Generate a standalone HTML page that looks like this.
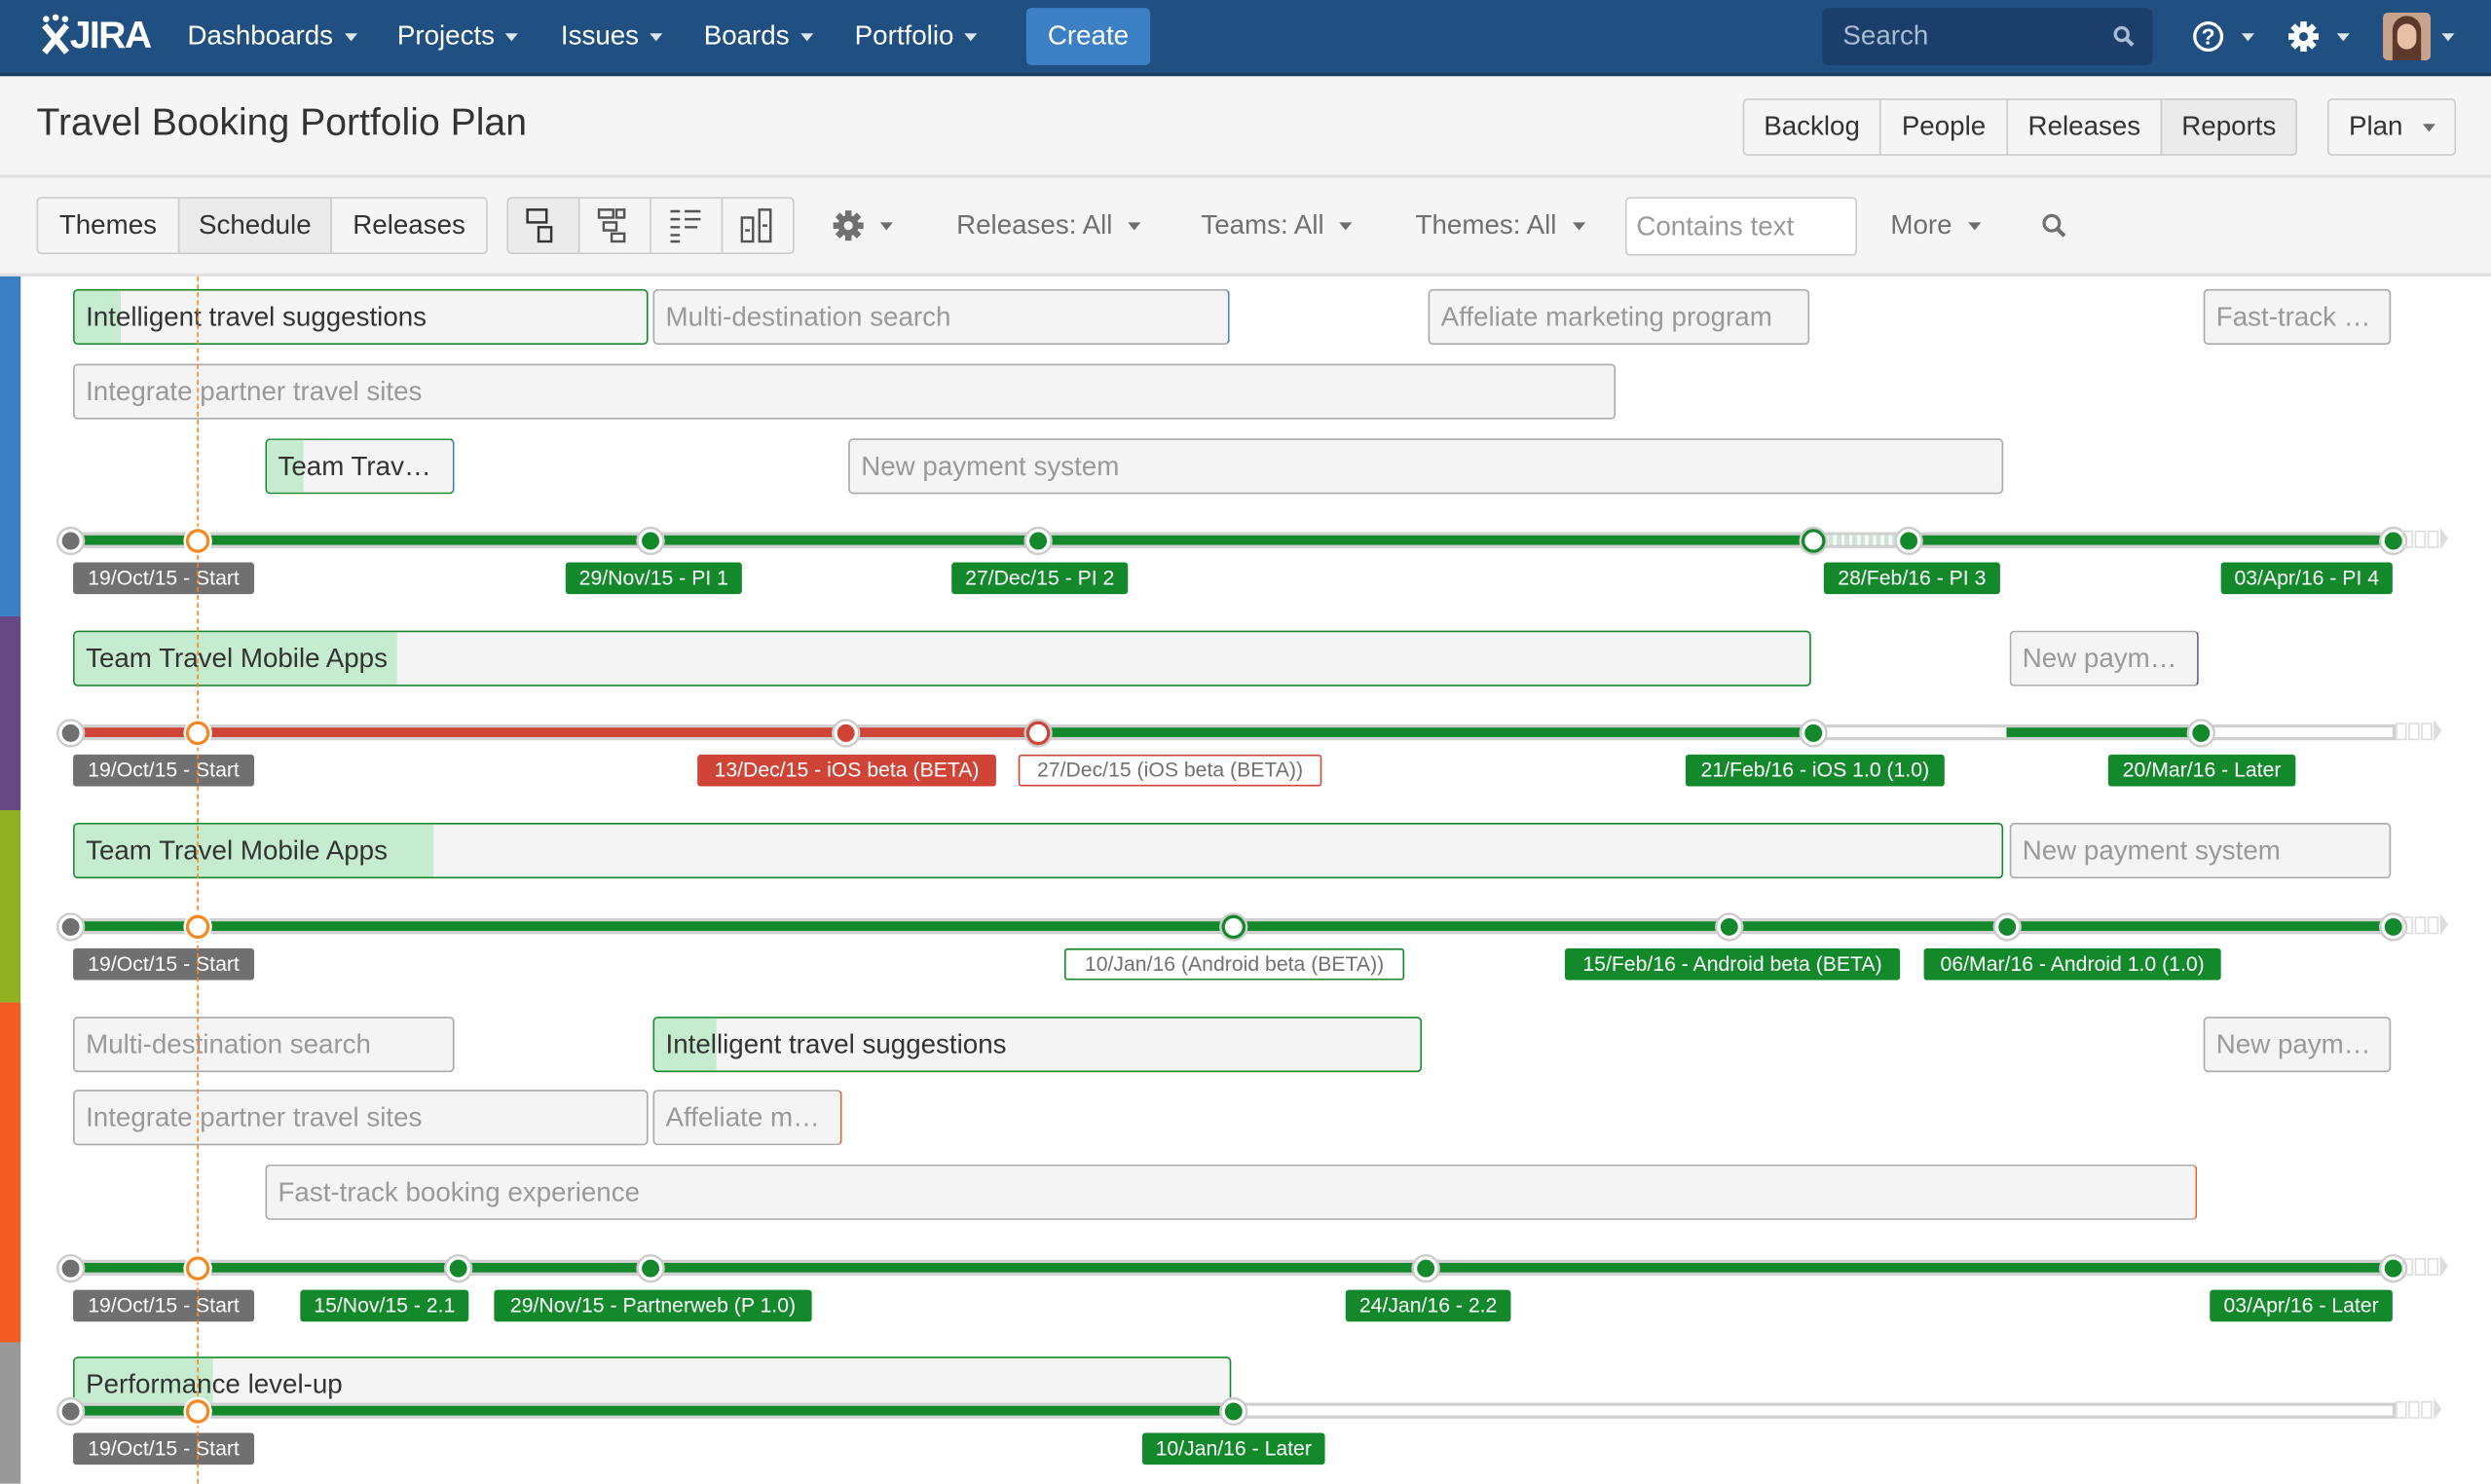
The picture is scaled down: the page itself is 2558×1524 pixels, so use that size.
<!DOCTYPE html>
<html><head><meta charset="utf-8"><style>
html,body{margin:0;padding:0;width:2558px;height:1524px;overflow:hidden;background:#fff}
#w{position:absolute;left:0;top:0;width:1568px;height:934px;transform:scale(1.63138);transform-origin:0 0;font-family:"Liberation Sans",Arial,sans-serif;overflow:hidden;background:#fff}
.a{position:absolute;white-space:nowrap;box-sizing:border-box}
.nav{color:#fff;font-size:17px;top:13px}
.car{display:inline-block;width:0;height:0;border-left:4px solid transparent;border-right:4px solid transparent;border-top:5px solid currentColor;vertical-align:middle;margin-left:7px;opacity:.85}
.btn{top:62px;height:36px;line-height:34px;border:1px solid #ccc;background:#f5f5f5;font-size:17px;color:#333;text-align:center}
.tb{top:124px;height:36px;line-height:34px;border:1px solid #ccc;background:#f5f5f5;font-size:17px;color:#333;text-align:center}
.fl{top:132px;font-size:17px;color:#707070}
.bar{height:35px;border:1px solid #aaa;border-radius:3px;background:#f4f4f4;font-size:17px;line-height:33px;color:#999;padding-left:7px;overflow:hidden}
.bar.g{border-color:#14892c;color:#333}
.bar .f{position:absolute;left:0;top:0;bottom:0;background:#c6ecd0}
.bar span{position:relative}
.trk{height:10px;background:#fff;border:2px solid #d0d0d0}
.seg{height:6px}
.n{width:15px;height:15px;border-radius:50%;border:2.5px solid #fff;box-shadow:0 0 0 1.5px #ccc;background:#14892c;margin:-7.5px 0 0 -7.5px}
.n.s{background:#707070}
.n.o{background:#fff;border:2.5px solid #f6871f;box-shadow:0 0 0 1.5px #fff}
.n.h{background:#fff;border:2.5px solid #14892c;box-shadow:0 0 0 1.5px #ccc}
.n.rh{background:#fff;border:2.5px solid #d04437;box-shadow:0 0 0 1.5px #ccc}
.n.r{background:#d04437}
.lb{height:20px;line-height:20px;font-size:13px;color:#fff;background:#14892c;border-radius:2px;text-align:center}
.lb.s{background:#707070}.lb.r{background:#d04437}
.lb.wg{background:#fff;border:1px solid #14892c;color:#707070;line-height:18px}
.lb.wr{background:#fff;border:1px solid #d04437;color:#707070;line-height:18px}
.end{width:40px;height:14px}
.end i{display:inline-block;width:5px;height:9px;border:1.5px solid #ddd;margin-right:1px;vertical-align:top}
.end b{display:inline-block;width:0;height:0;border-top:7px solid transparent;border-bottom:7px solid transparent;border-left:5px solid #ddd;vertical-align:top;margin-top:-2px}
</style></head><body><div id="w">
<!-- nav -->
<div class="a" style="left:0;top:0;width:1568px;height:48px;background:#205081;border-bottom:2px solid #1b3a5e"></div>
<svg class="a" style="left:25px;top:9px" width="20" height="26" viewBox="0 0 20 26"><circle cx="4" cy="3" r="2" fill="#fff"/><circle cx="10" cy="2" r="2" fill="#fff"/><circle cx="16" cy="3" r="2" fill="#fff"/><path d="M3 7 L17 24 M17 7 L3 24" stroke="#fff" stroke-width="4"/></svg>
<div class="a" style="left:44px;top:9px;color:#fff;font-size:24px;font-weight:bold;letter-spacing:-1px">JIRA</div>
<div class="a nav" style="left:118px">Dashboards<span class="car"></span></div>
<div class="a nav" style="left:250px">Projects<span class="car"></span></div>
<div class="a nav" style="left:353px">Issues<span class="car"></span></div>
<div class="a nav" style="left:443px">Boards<span class="car"></span></div>
<div class="a nav" style="left:538px">Portfolio<span class="car"></span></div>
<div class="a" style="left:646px;top:5px;width:78px;height:36px;background:#3b7fc4;border-radius:3px;color:#fff;font-size:17px;line-height:36px;text-align:center">Create</div>
<div class="a" style="left:1147px;top:5px;width:208px;height:36px;background:#1b3f6a;border-radius:4px;color:#a8bdd4;font-size:17px;line-height:36px;padding-left:13px">Search</div>
<svg class="a" style="left:1330px;top:16px" width="14" height="14" viewBox="0 0 14 14"><circle cx="5.5" cy="5.5" r="4" fill="none" stroke="#a8bdd4" stroke-width="2"/><path d="M8.5 8.5 L12.5 12.5" stroke="#a8bdd4" stroke-width="2.5"/></svg>
<svg class="a" style="left:1380px;top:13px" width="20" height="20" viewBox="0 0 20 20"><circle cx="10" cy="10" r="8.5" fill="none" stroke="#fff" stroke-width="2"/><text x="10" y="15" text-anchor="middle" fill="#fff" font-size="14" font-weight="bold" font-family="Liberation Sans">?</text></svg>
<div class="a" style="left:1404px;top:13px;color:#fff;font-size:17px"><span class="car"></span></div>
<svg class="a" style="left:1440px;top:13px" width="20" height="20" viewBox="0 0 20 20"><g fill="#fff"><circle cx="10" cy="10" r="6.5"/><rect x="8" y="0.5" width="4" height="19"/><rect x="0.5" y="8" width="19" height="4"/><rect x="8" y="0.5" width="4" height="19" transform="rotate(45 10 10)"/><rect x="8" y="0.5" width="4" height="19" transform="rotate(-45 10 10)"/></g><circle cx="10" cy="10" r="2.8" fill="#205081"/></svg>
<div class="a" style="left:1464px;top:13px;color:#fff;font-size:17px"><span class="car"></span></div>
<div class="a" style="left:1500px;top:8px;width:30px;height:30px;border-radius:3px;background:#c9a38c;overflow:hidden"><div class="a" style="left:6px;top:2px;width:18px;height:30px;border-radius:9px 9px 0 0;background:#5b3a2b"></div><div class="a" style="left:9px;top:7px;width:12px;height:16px;border-radius:6px;background:#e8c0a5"></div></div>
<div class="a" style="left:1530px;top:13px;color:#fff;font-size:17px"><span class="car"></span></div>
<!-- header -->
<div class="a" style="left:0;top:48px;width:1568px;height:126px;background:#f5f5f5"></div>
<div class="a" style="left:0;top:110px;width:1568px;height:2px;background:#e2e2e2"></div>
<div class="a" style="left:0;top:172px;width:1568px;height:2px;background:#e2e2e2"></div>
<div class="a" style="left:23px;top:64px;font-size:24px;color:#333">Travel Booking Portfolio Plan</div>
<div class="a btn" style="left:1097px;width:87px;border-radius:3px 0 0 3px">Backlog</div>
<div class="a btn" style="left:1183px;width:81px">People</div>
<div class="a btn" style="left:1263px;width:98px">Releases</div>
<div class="a btn" style="left:1360px;width:86px;background:#ebebeb;border-radius:0 3px 3px 0">Reports</div>
<div class="a btn" style="left:1465px;width:81px;border-radius:3px">Plan<span class="car" style="margin-left:12px;color:#555"></span></div>
<!-- toolbar -->
<div class="a tb" style="left:23px;width:90px;border-radius:3px 0 0 3px">Themes</div>
<div class="a tb" style="left:112px;width:97px;background:#ebebeb">Schedule</div>
<div class="a tb" style="left:208px;width:99px;border-radius:0 3px 3px 0">Releases</div>
<div class="a tb" style="left:319px;width:46px;background:#ebebeb;border-radius:3px 0 0 3px"></div>
<div class="a tb" style="left:364px;width:46px"></div>
<div class="a tb" style="left:409px;width:46px"></div>
<div class="a tb" style="left:454px;width:46px;border-radius:0 3px 3px 0"></div>
<svg class="a" style="left:331px;top:131px" width="22" height="22" viewBox="0 0 22 22" fill="none" stroke="#333" stroke-width="1.5"><rect x="1" y="1" width="12" height="8"/><rect x="8" y="12" width="8" height="9"/></svg>
<svg class="a" style="left:376px;top:131px" width="22" height="22" viewBox="0 0 22 22" fill="none" stroke="#555" stroke-width="1.5"><rect x="1" y="1" width="9" height="5"/><rect x="12" y="1" width="5" height="5"/><rect x="4" y="9" width="8" height="5"/><rect x="9" y="16" width="8" height="5"/></svg>
<svg class="a" style="left:421px;top:131px" width="22" height="22" viewBox="0 0 22 22" stroke="#555" stroke-width="1.5"><path d="M1 2h6M10 2h10M1 7h6M10 7h10M1 12h6M10 12h8M1 17h6M1 21h6"/></svg>
<svg class="a" style="left:466px;top:131px" width="22" height="22" viewBox="0 0 22 22" fill="none" stroke="#555" stroke-width="1.5"><rect x="1" y="6" width="7" height="15"/><rect x="12" y="1" width="7" height="20"/><path d="M3 14h3M14 11h3"/></svg>
<svg class="a" style="left:524px;top:132px" width="20" height="20" viewBox="0 0 20 20"><g fill="#707070"><circle cx="10" cy="10" r="6.5"/><rect x="8" y="0.5" width="4" height="19"/><rect x="0.5" y="8" width="19" height="4"/><rect x="8" y="0.5" width="4" height="19" transform="rotate(45 10 10)"/><rect x="8" y="0.5" width="4" height="19" transform="rotate(-45 10 10)"/></g><circle cx="10" cy="10" r="2.8" fill="#f5f5f5"/></svg>
<div class="a fl" style="left:547px;color:#555"><span class="car"></span></div>
<div class="a fl" style="left:602px">Releases: All<span class="car" style="margin-left:10px;color:#555"></span></div>
<div class="a fl" style="left:756px">Teams: All<span class="car" style="margin-left:10px;color:#555"></span></div>
<div class="a fl" style="left:891px">Themes: All<span class="car" style="margin-left:10px;color:#555"></span></div>
<div class="a" style="left:1023px;top:124px;width:146px;height:37px;background:#fff;border:1px solid #ccc;border-radius:3px;color:#999;font-size:17px;line-height:35px;padding-left:6px">Contains text</div>
<div class="a fl" style="left:1190px">More<span class="car" style="margin-left:10px;color:#555"></span></div>
<svg class="a" style="left:1285px;top:134px" width="16" height="16" viewBox="0 0 16 16"><circle cx="6.5" cy="6.5" r="4.8" fill="none" stroke="#707070" stroke-width="2"/><path d="M10 10 L14.5 14.5" stroke="#707070" stroke-width="2.5"/></svg>
<!-- stripes -->
<div class="a" style="left:0;top:174px;width:13px;height:214px;background:#3b7fc4"></div>
<div class="a" style="left:0;top:388px;width:13px;height:122px;background:#654982"></div>
<div class="a" style="left:0;top:510px;width:13px;height:121px;background:#8eb021"></div>
<div class="a" style="left:0;top:631px;width:13px;height:214px;background:#f15c23"></div>
<div class="a" style="left:0;top:845px;width:13px;height:89px;background:#999"></div>

<!-- Row 1 -->
<div class="a bar g" style="left:46px;top:182px;width:362px"><div class="f" style="width:29px"></div><span>Intelligent travel suggestions</span></div>
<div class="a bar" style="left:411px;top:182px;width:363px;border-right-color:#3b7fc4"><span>Multi-destination search</span></div>
<div class="a bar" style="left:899px;top:182px;width:240px"><span>Affeliate marketing program</span></div>
<div class="a bar" style="left:1387px;top:182px;width:118px"><span>Fast-track …</span></div>
<div class="a bar" style="left:46px;top:229px;width:971px"><span>Integrate partner travel sites</span></div>
<div class="a bar g" style="left:167px;top:276px;width:119px;border-right-color:#3b7fc4"><div class="f" style="width:23px"></div><span>Team Trav…</span></div>
<div class="a bar" style="left:534px;top:276px;width:727px"><span>New payment system</span></div>

<div class="a trk" style="left:42px;top:335px;width:1466px"></div>
<div class="a seg" style="left:44px;top:337px;width:1097px;background:#14892c"></div>
<div class="a seg" style="left:1141px;top:337px;width:60px;background:repeating-linear-gradient(90deg,#cfe5d4 0 3px,#fff 3px 5px)"></div>
<div class="a seg" style="left:1201px;top:337px;width:305px;background:#14892c"></div>
<div class="a n s" style="left:44px;top:340px"></div>
<div class="a n" style="left:409px;top:340px"></div>
<div class="a n" style="left:653px;top:340px"></div>
<div class="a n h" style="left:1141px;top:340px"></div>
<div class="a n" style="left:1201px;top:340px"></div>
<div class="a n" style="left:1506px;top:340px"></div>
<div class="a end" style="left:1512px;top:334px"><i></i><i></i><i></i><b></b></div>
<div class="a lb s" style="left:46px;top:354px;width:114px">19/Oct/15 - Start</div>
<div class="a lb" style="left:356px;top:354px;width:111px">29/Nov/15 - PI 1</div>
<div class="a lb" style="left:599px;top:354px;width:111px">27/Dec/15 - PI 2</div>
<div class="a lb" style="left:1148px;top:354px;width:111px">28/Feb/16 - PI 3</div>
<div class="a lb" style="left:1398px;top:354px;width:108px">03/Apr/16 - PI 4</div>

<!-- Row 2 -->
<div class="a bar g" style="left:46px;top:397px;width:1094px"><div class="f" style="width:203px"></div><span>Team Travel Mobile Apps</span></div>
<div class="a bar" style="left:1265px;top:397px;width:119px;border-right-color:#654982"><span>New paym…</span></div>
<div class="a trk" style="left:42px;top:456px;width:1466px"></div>
<div class="a seg" style="left:44px;top:458px;width:609px;background:#d04437"></div>
<div class="a seg" style="left:653px;top:458px;width:488px;background:#14892c"></div>
<div class="a seg" style="left:1263px;top:458px;width:122px;background:#14892c"></div>
<div class="a n s" style="left:44px;top:461px"></div>
<div class="a n r" style="left:532px;top:461px"></div>
<div class="a n rh" style="left:653px;top:461px"></div>
<div class="a n" style="left:1141px;top:461px"></div>
<div class="a n" style="left:1385px;top:461px"></div>
<div class="a end" style="left:1508px;top:455px"><i></i><i></i><i></i><b></b></div>
<div class="a lb s" style="left:46px;top:475px;width:114px">19/Oct/15 - Start</div>
<div class="a lb r" style="left:439px;top:475px;width:188px">13/Dec/15 - iOS beta (BETA)</div>
<div class="a lb wr" style="left:641px;top:475px;width:191px">27/Dec/15 (iOS beta (BETA))</div>
<div class="a lb" style="left:1061px;top:475px;width:163px">21/Feb/16 - iOS 1.0 (1.0)</div>
<div class="a lb" style="left:1327px;top:475px;width:118px">20/Mar/16 - Later</div>

<!-- Row 3 -->
<div class="a bar g" style="left:46px;top:518px;width:1215px"><div class="f" style="width:226px"></div><span>Team Travel Mobile Apps</span></div>
<div class="a bar" style="left:1265px;top:518px;width:240px"><span>New payment system</span></div>
<div class="a trk" style="left:42px;top:578px;width:1466px"></div>
<div class="a seg" style="left:44px;top:580px;width:1462px;background:#14892c"></div>
<div class="a n s" style="left:44px;top:583px"></div>
<div class="a n h" style="left:776px;top:583px"></div>
<div class="a n" style="left:1088px;top:583px"></div>
<div class="a n" style="left:1263px;top:583px"></div>
<div class="a n" style="left:1506px;top:583px"></div>
<div class="a end" style="left:1512px;top:577px"><i></i><i></i><i></i><b></b></div>
<div class="a lb s" style="left:46px;top:597px;width:114px">19/Oct/15 - Start</div>
<div class="a lb wg" style="left:670px;top:597px;width:214px">10/Jan/16 (Android beta (BETA))</div>
<div class="a lb" style="left:985px;top:597px;width:211px">15/Feb/16 - Android beta (BETA)</div>
<div class="a lb" style="left:1211px;top:597px;width:187px">06/Mar/16 - Android 1.0 (1.0)</div>

<!-- Row 4 -->
<div class="a bar" style="left:46px;top:640px;width:240px"><span>Multi-destination search</span></div>
<div class="a bar g" style="left:411px;top:640px;width:484px"><div class="f" style="width:39px"></div><span>Intelligent travel suggestions</span></div>
<div class="a bar" style="left:1387px;top:640px;width:118px"><span>New paym…</span></div>
<div class="a bar" style="left:46px;top:686px;width:362px"><span>Integrate partner travel sites</span></div>
<div class="a bar" style="left:411px;top:686px;width:119px;border-right-color:#f15c23"><span>Affeliate m…</span></div>
<div class="a bar" style="left:167px;top:733px;width:1216px;border-right-color:#f15c23"><span>Fast-track booking experience</span></div>
<div class="a trk" style="left:42px;top:793px;width:1466px"></div>
<div class="a seg" style="left:44px;top:795px;width:1462px;background:#14892c"></div>
<div class="a n s" style="left:44px;top:798px"></div>
<div class="a n" style="left:288px;top:798px"></div>
<div class="a n" style="left:409px;top:798px"></div>
<div class="a n" style="left:897px;top:798px"></div>
<div class="a n" style="left:1506px;top:798px"></div>
<div class="a end" style="left:1512px;top:792px"><i></i><i></i><i></i><b></b></div>
<div class="a lb s" style="left:46px;top:812px;width:114px">19/Oct/15 - Start</div>
<div class="a lb" style="left:189px;top:812px;width:106px">15/Nov/15 - 2.1</div>
<div class="a lb" style="left:311px;top:812px;width:200px">29/Nov/15 - Partnerweb (P 1.0)</div>
<div class="a lb" style="left:847px;top:812px;width:104px">24/Jan/16 - 2.2</div>
<div class="a lb" style="left:1391px;top:812px;width:115px">03/Apr/16 - Later</div>

<!-- Row 5 -->
<div class="a bar g" style="left:46px;top:854px;width:729px"><div class="f" style="width:87px"></div><span>Performance level-up</span></div>
<div class="a trk" style="left:42px;top:883px;width:1466px"></div>
<div class="a seg" style="left:44px;top:885px;width:732px;background:#14892c"></div>
<div class="a n s" style="left:44px;top:888px"></div>
<div class="a n" style="left:776px;top:888px"></div>
<div class="a end" style="left:1508px;top:882px"><i></i><i></i><i></i><b></b></div>
<div class="a lb s" style="left:46px;top:902px;width:114px">19/Oct/15 - Start</div>
<div class="a lb" style="left:719px;top:902px;width:115px">10/Jan/16 - Later</div>

<!-- today line -->
<div class="a" style="left:124px;top:174px;width:0;height:760px;border-left:1.5px dashed #f6871f"></div>
<div class="a n o" style="left:124px;top:340px"></div>
<div class="a n o" style="left:124px;top:461px"></div>
<div class="a n o" style="left:124px;top:583px"></div>
<div class="a n o" style="left:124px;top:798px"></div>
<div class="a n o" style="left:124px;top:888px"></div>
</div></body></html>
